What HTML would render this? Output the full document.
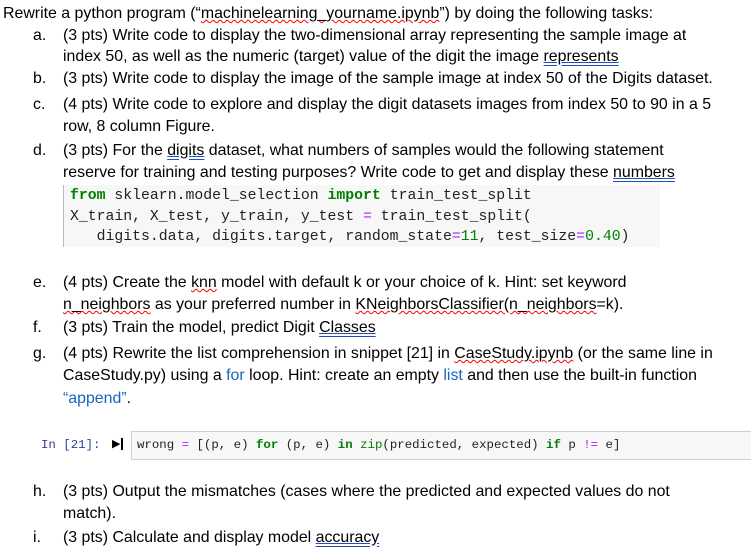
<!DOCTYPE html>
<html><head><meta charset="utf-8"><style>
body{margin:0;width:751px;height:555px;background:#fff;position:relative;overflow:hidden;font-family:"Liberation Sans",sans-serif;font-size:15.9px;color:#000}
.l{position:absolute;white-space:nowrap;line-height:18px}
.m{font-family:"Liberation Mono",monospace}
.w{text-decoration:underline wavy red;text-decoration-thickness:1px}
.d{text-decoration:underline double #1f4fbf}
.b{color:#1565c0}
.k{color:#008000;font-weight:bold}
.p{color:#aa22ff}
.n{color:#008000}
</style></head><body>
<div class="l" style="left:3px;top:5px">Rewrite a python program (“<span class="w">machinelearning_yourname.ipynb</span>”) by doing the following tasks:</div>
<div class="l" style="left:33px;top:27px">a.</div>
<div class="l" style="left:63px;top:27px">(3 pts) Write code to display the two-dimensional array representing the sample image at</div>
<div class="l" style="left:63px;top:48px">index 50, as well as the numeric (target) value of the digit the image <span class="d">represents</span></div>
<div class="l" style="left:33px;top:70px">b.</div>
<div class="l" style="left:63px;top:70px">(3 pts) Write code to display the image of the sample image at index 50 of the Digits dataset.</div>
<div class="l" style="left:33px;top:96px">c.</div>
<div class="l" style="left:63px;top:96px">(4 pts) Write code to explore and display the digit datasets images from index 50 to 90 in a 5</div>
<div class="l" style="left:63px;top:118px">row, 8 column Figure.</div>
<div class="l" style="left:33px;top:142px">d.</div>
<div class="l" style="left:63px;top:142px">(3 pts) For the <span class="d">digits</span> dataset, what numbers of samples would the following statement</div>
<div class="l" style="left:63px;top:164px">reserve for training and testing purposes? Write code to get and display these <span class="d">numbers</span></div>
<div style="position:absolute;left:63px;top:185px;width:596px;height:62px;background:#f7f7f7;border-left:1px solid #bbb"></div>
<div class="l m" style="left:70px;top:186px;font-size:14.8px;line-height:20.5px;color:#222"><span class="k">from</span> sklearn.model_selection <span class="k">import</span> train_test_split<br>X_train, X_test, y_train, y_test <span class="p">=</span> train_test_split(<br>&nbsp;&nbsp;&nbsp;digits.data, digits.target, random_state<span class="p">=</span><span class="n">11</span>, test_size<span class="p">=</span><span class="n">0.40</span>)</div>
<div class="l" style="left:33px;top:274px">e.</div>
<div class="l" style="left:63px;top:274px">(4 pts) Create the <span class="w">knn</span> model with default k or your choice of k. Hint: set keyword</div>
<div class="l" style="left:63px;top:296px"><span class="w">n_neighbors</span> as your preferred number in <span class="w">KNeighborsClassifier(n_neighbors</span>=k).</div>
<div class="l" style="left:33px;top:319px">f.</div>
<div class="l" style="left:63px;top:319px">(3 pts) Train the model, predict Digit <span class="d">Classes</span></div>
<div class="l" style="left:33px;top:345px">g.</div>
<div class="l" style="left:63px;top:345px">(4 pts) Rewrite the list comprehension in snippet [21] in <span class="w">CaseStudy.ipynb</span> (or the same line in</div>
<div class="l" style="left:63px;top:367px">CaseStudy.py) using a <span class="b">for</span> loop. Hint: create an empty <span class="b">list</span> and then use the built-in function</div>
<div class="l" style="left:63px;top:390px"><span class="b">“append”</span>.</div>
<div style="position:absolute;left:131px;top:431px;width:640px;height:27px;background:#f7f7f7;border:1px solid #cfcfcf"></div>
<div class="l m" style="left:41px;top:436px;font-size:12.4px;color:#303f9f">In [21]:</div>
<div class="l" style="left:112px;top:435px;font-size:11px">&#9654;</div>
<div style="position:absolute;left:121px;top:438px;width:2px;height:12px;background:#000"></div>
<div class="l m" style="left:137px;top:436px;font-size:12.4px;color:#222">wrong <span class="p">=</span> [(p, e) <span class="k">for</span> (p, e) <span class="k">in</span> <span class="n">zip</span>(predicted, expected) <span class="k">if</span> p <span class="p">!=</span> e]</div>
<div class="l" style="left:33px;top:483px">h.</div>
<div class="l" style="left:63px;top:483px">(3 pts) Output the mismatches (cases where the predicted and expected values do not</div>
<div class="l" style="left:63px;top:505px">match).</div>
<div class="l" style="left:33px;top:529px">i.</div>
<div class="l" style="left:63px;top:529px">(3 pts) Calculate and display model <span class="d">accuracy</span></div>
</body></html>
